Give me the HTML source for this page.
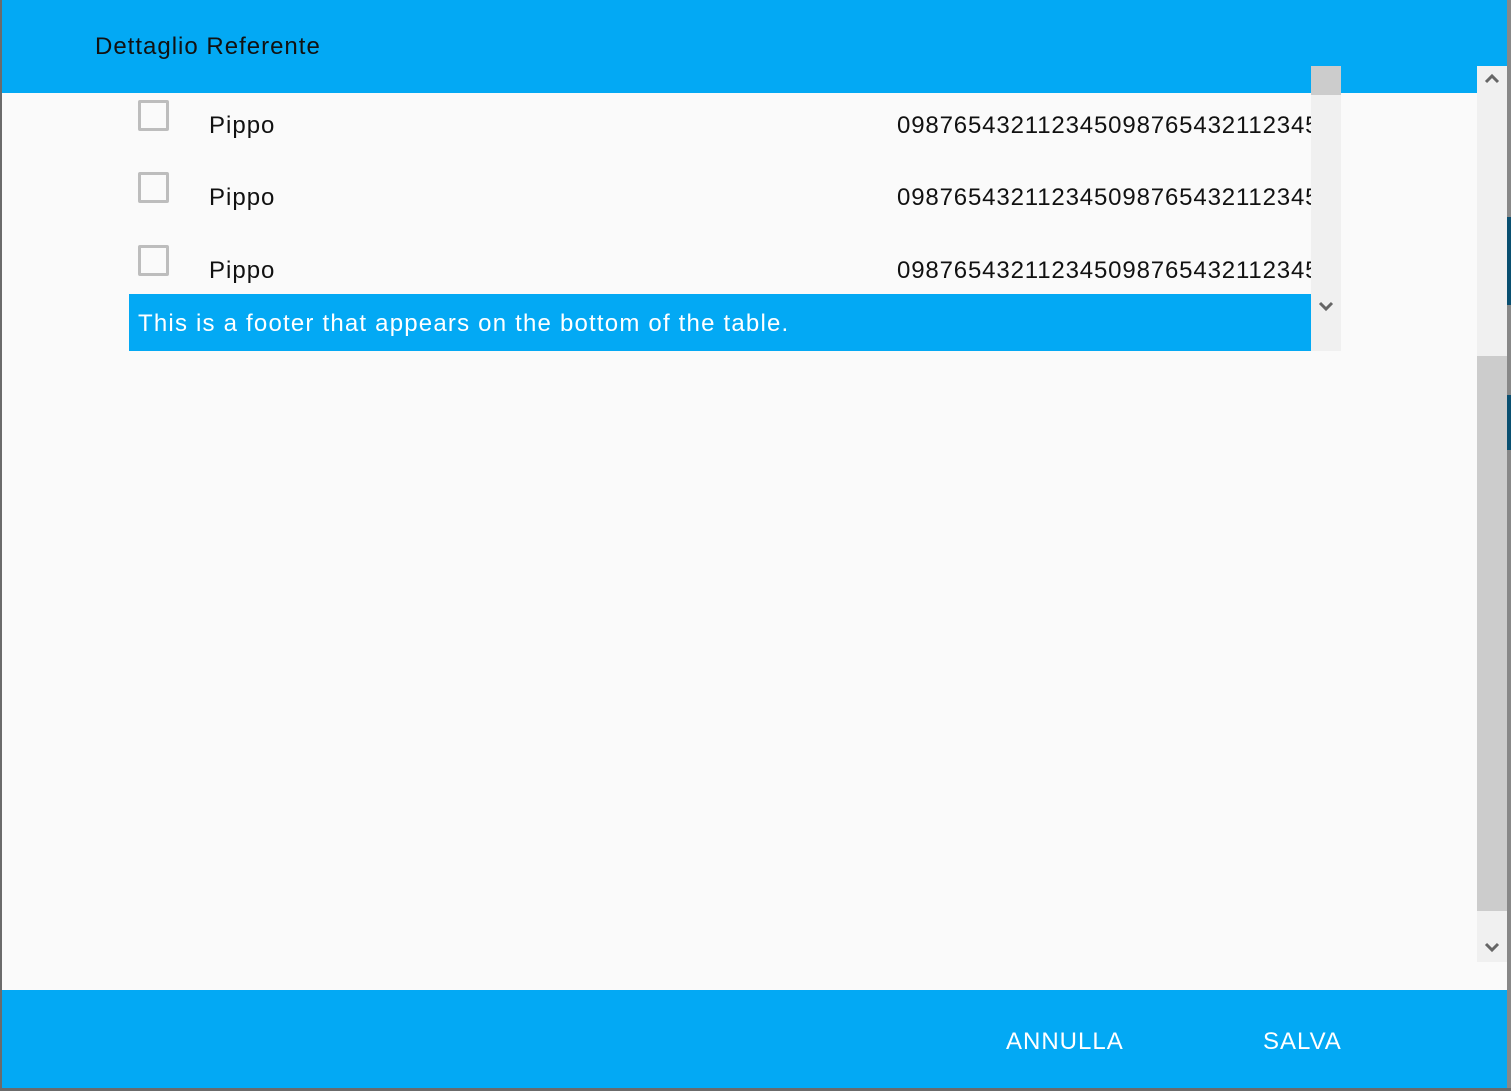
<!DOCTYPE html>
<html><head><meta charset="utf-8"><style>
*{margin:0;padding:0;box-sizing:border-box}
body{width:1511px;height:1091px;position:relative;overflow:hidden;background:#fafafa;font-family:"Liberation Sans",sans-serif}
.a{position:absolute}
.t{font-size:24px;color:#111;white-space:nowrap;line-height:1;letter-spacing:1px}
.n{letter-spacing:0.85px}
.cb{width:31px;height:31px;border:3px solid #bdbdbd;border-radius:2px;background:#fafafa}
</style></head><body>
<div class="a" style="left:0;top:0;width:2px;height:1091px;background:#6b6b6b"></div>
<div class="a" style="left:1507px;top:0;width:4px;height:1091px;background:#888"></div>
<div class="a" style="left:1507px;top:217px;width:4px;height:88px;background:#0a4f70"></div>
<div class="a" style="left:1507px;top:395px;width:4px;height:55px;background:#0a4f70"></div>
<div class="a" style="left:0;top:1088px;width:1511px;height:3px;background:#6b6b6b"></div>
<div class="a" style="left:2px;top:0;width:1505px;height:93px;background:#03a9f4"></div>
<div class="a t" style="left:95px;top:35px">Dettaglio Referente</div>

<div class="a cb" style="left:138px;top:100px"></div>
<div class="a cb" style="left:138px;top:172px"></div>
<div class="a cb" style="left:138px;top:245px"></div>
<div class="a t" style="left:209px;top:114px">Pippo</div>
<div class="a t" style="left:209px;top:186px">Pippo</div>
<div class="a t" style="left:209px;top:259px">Pippo</div>
<div class="a" style="left:897px;top:0;width:414px;height:300px;overflow:hidden">
<div class="a t n" style="left:0;top:114px">0987654321123450987654321123456</div>
<div class="a t n" style="left:0;top:186px">0987654321123450987654321123456</div>
<div class="a t n" style="left:0;top:259px">0987654321123450987654321123456</div>
</div>
<div class="a" style="left:129px;top:294px;width:1182px;height:57px;background:#03a9f4"></div>
<div class="a t" style="left:138px;top:312px;color:#fff;letter-spacing:1.2px">This is a footer that appears on the bottom of the table.</div>

<div class="a" style="left:1311px;top:66px;width:30px;height:285px;background:#f0f0f0"></div>
<div class="a" style="left:1311px;top:66px;width:30px;height:29px;background:#cccccc"></div>
<svg class="a" style="left:1318px;top:300px" width="16" height="12"><path d="M2 3 L8 9 L14 3" stroke="#666" stroke-width="3" fill="none"/></svg>

<div class="a" style="left:1477px;top:66px;width:30px;height:896px;background:#f0f0f0"></div>
<div class="a" style="left:1477px;top:356px;width:30px;height:555px;background:#cccccc"></div>
<svg class="a" style="left:1484px;top:72px" width="16" height="14"><path d="M2 10 L8 4 L14 10" stroke="#666" stroke-width="3" fill="none"/></svg>
<svg class="a" style="left:1484px;top:940px" width="16" height="14"><path d="M2 4 L8 10 L14 4" stroke="#666" stroke-width="3" fill="none"/></svg>

<div class="a" style="left:2px;top:990px;width:1505px;height:98px;background:#03a9f4"></div>
<div class="a t" style="left:1006px;top:1030px;color:#fff">ANNULLA</div>
<div class="a t" style="left:1263px;top:1030px;color:#fff">SALVA</div>
</body></html>
